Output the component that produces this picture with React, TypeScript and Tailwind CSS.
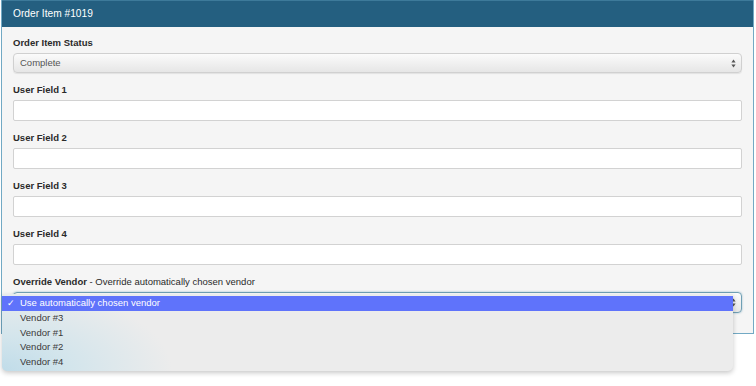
import React from 'react';

const font = { fontFamily: '"Liberation Sans", Arial, sans-serif' };

function UpDown() {
  return (
    <svg width="5" height="9" viewBox="0 0 5 9" className="shrink-0">
      <path d="M2.5 0.5 L4.6 3.6 L0.4 3.6 Z" fill="#555" />
      <path d="M2.5 8.5 L4.6 5.4 L0.4 5.4 Z" fill="#555" />
    </svg>
  );
}

function Field({ label, children }: { label: React.ReactNode; children: React.ReactNode }) {
  return (
    <div className="mb-[10px]">
      <div className="h-[14px] leading-[14px] text-[9.5px] text-[#2a2a2a] mb-[3px]">{label}</div>
      {children}
    </div>
  );
}

function TextInput() {
  return <div className="h-[21px] bg-white border border-[#d2d2d2] rounded-[2px]" />;
}

const vendors = ['Vendor #3', 'Vendor #1', 'Vendor #2', 'Vendor #4'];

export default function App() {
  return (
    <div className="relative w-[756px] h-[386px] bg-white" style={font}>
      <div className="ml-[1px] w-[753px] border-x border-b border-[#72a9c4]">
        {/* Header */}
        <div className="h-[27px] bg-[#245f80] border-t border-[#3d7a9a] flex items-center px-[11px]">
          <span className="text-[10.2px] text-white">Order Item #1019</span>
        </div>

        {/* Body */}
        <div className="bg-[#f5f5f5] pt-[9px] pb-[10px] px-[11px]">
          <Field label={<b>Order Item Status</b>}>
            <div className="h-[20px] rounded-[4px] border border-[#d0d0d0] bg-gradient-to-b from-[#fbfbfb] to-[#e6e6e6] shadow-[0_1px_1px_rgba(0,0,0,0.08)] flex items-center justify-between pl-[6px] pr-[5px]">
              <span className="text-[9.5px] text-[#555]">Complete</span>
              <UpDown />
            </div>
          </Field>
          <Field label={<b>User Field 1</b>}>
            <TextInput />
          </Field>
          <Field label={<b>User Field 2</b>}>
            <TextInput />
          </Field>
          <Field label={<b>User Field 3</b>}>
            <TextInput />
          </Field>
          <Field label={<b>User Field 4</b>}>
            <TextInput />
          </Field>
          <Field
            label={
              <>
                <b>Override Vendor</b> - Override automatically chosen vendor
              </>
            }
          >
            <div className="h-[21px] rounded-[4px] border border-[#6f9fb4] bg-gradient-to-b from-[#fbfbfb] to-[#e6e6e6] shadow-[0_0_2px_rgba(80,140,170,0.6)] flex items-center justify-end pr-[5px]">
              <UpDown />
            </div>
          </Field>
        </div>
      </div>

      {/* Open select menu */}
      <div
        className="absolute left-[2px] top-[294px] w-[731px] h-[77px] rounded-b-[5px] pt-[2px] shadow-[0_2px_5px_rgba(0,0,0,0.22)] overflow-hidden"
        style={{
          background:
            'radial-gradient(ellipse 170px 85px at 0% 100%, #c0dce9 0%, #d3e5ec 40%, rgba(236,236,236,0) 100%), #ececec',
        }}
      >
        <div className="h-[15px] bg-[#5f73fb] flex items-center text-[9.5px] text-white">
          <span className="w-[18px] pl-[5px] text-[9px]">✓</span>
          <span>Use automatically chosen vendor</span>
        </div>
        {vendors.map((v) => (
          <div key={v} className="h-[14.5px] flex items-center pl-[18px] text-[9.5px] text-[#3a3a3a]">
            {v}
          </div>
        ))}
      </div>
    </div>
  );
}
